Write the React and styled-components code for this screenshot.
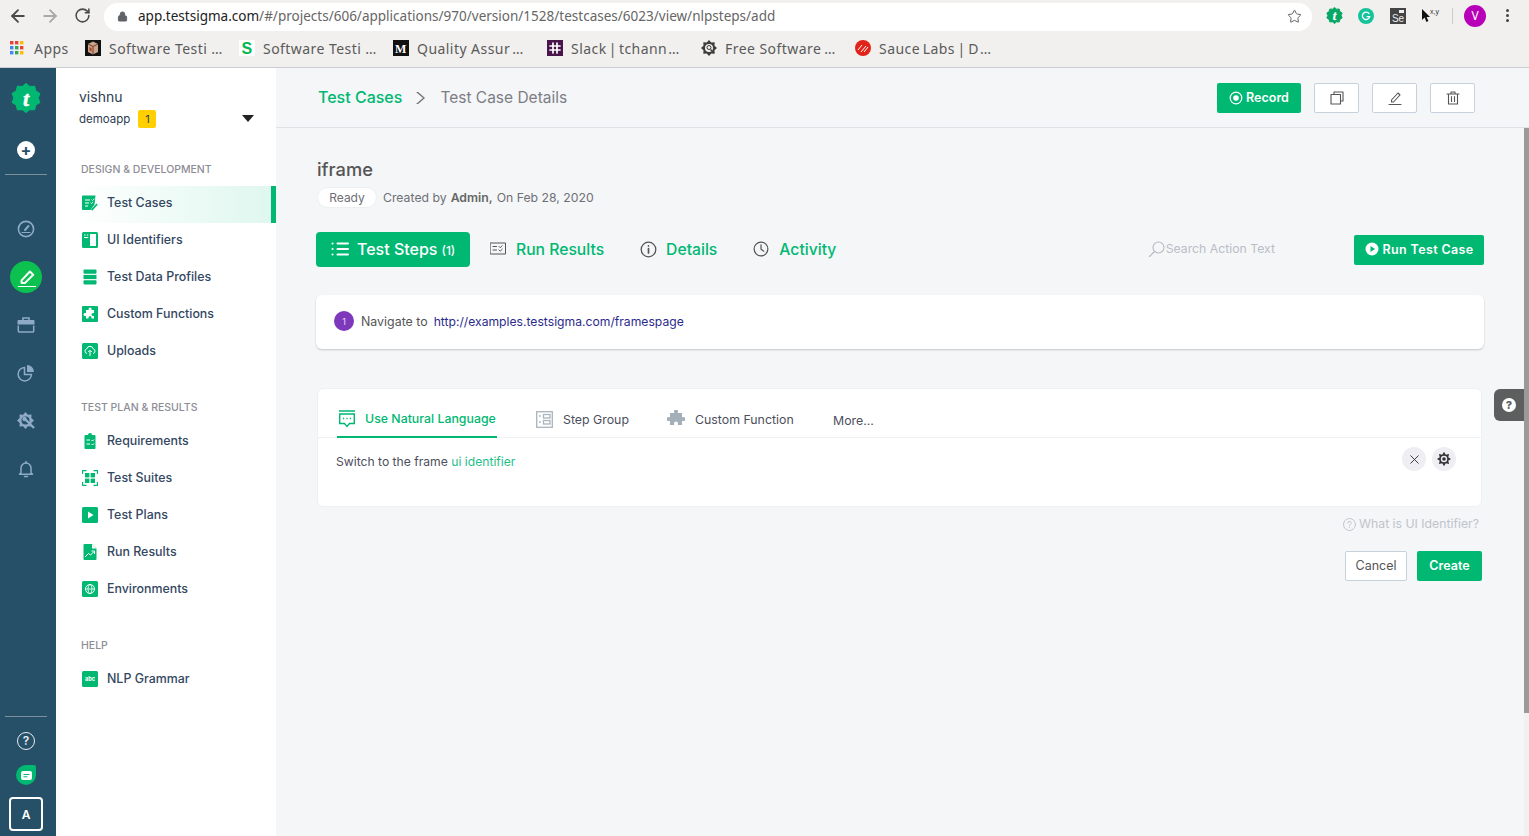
import React from "react";
import styled, { createGlobalStyle } from "styled-components";
import { ArrowLeft, ArrowRight, RotateCw, Lock, Star, X } from "lucide-react";

const GREEN = "#00b872";
const RAIL = "#255067";
const RAILICON = "#8eaac6";

const Global = createGlobalStyle`
  html, body { margin: 0; padding: 0; height: 100%; overflow: hidden; }
  body { font-family: Inter, "Liberation Sans", sans-serif; background: #f4f6f8; }
  #root { height: 100vh; }
  * { box-sizing: border-box; }
`;

const Page = styled.div`display: flex; flex-direction: column; width: 1529px; height: 836px; overflow: hidden;`;
const BrowserBar = styled.div`display: flex; align-items: center; height: 31px; padding-left: 2px; background: #f1f0ee;`;
const NavBtn = styled.span`display: flex; align-items: center; justify-content: center; width: 32px; height: 31px; color: ${p => p.$off ? "#a9a9a9" : "#4a4a4a"};`;
const Address = styled.div`display: flex; align-items: center; width: 1208px; height: 28px; margin: 2px 6px 0 6px; padding: 0 10px 0 13px; background: #fff; border-radius: 14px; color: #5f6368;`;
const Url = styled.span`flex: 1; margin: -2px 0 0 10px; font: 13.53px/28px "Noto Sans", sans-serif; color: #666; white-space: nowrap; b { font-weight: 400; color: #222; }`;
const ExtBtn = styled.span`display: flex; align-items: center; justify-content: center; width: 32px; height: 28px;`;
const BarRule = styled.span`width: 1px; height: 16px; margin: 0 11px 0 6px; background: #ccc;`;
const Avatar = styled.span`display: flex; align-items: center; justify-content: center; width: 22px; height: 22px; border-radius: 50%; background: #b800b8; color: #fff; font: 12px "Noto Sans", sans-serif;`;
const Dots = styled.span`display: flex; flex-direction: column; gap: 2px; margin-left: 20px; i { width: 3px; height: 3px; border-radius: 50%; background: #444; }`;
const SeTile = styled.span`position: relative; display: flex; flex-direction: column; justify-content: flex-end; align-items: center; width: 16px; height: 16px; background: #444; color: #eee; font: 400 10px/11px "Liberation Sans", sans-serif; &::after { content: ""; position: absolute; top: 2px; right: 2px; width: 5px; height: 3px; background: #eee; }`;
const XyTag = styled.span`font: 7px "Liberation Sans", sans-serif; color: #333; margin: -8px 0 0 -2px;`;

const Bookmarks = styled.div`display: flex; align-items: center; height: 37px; padding: 0 0 2px 10px; background: #f1f0ee; border-bottom: 1px solid #c9ccd0;`;
const Bookmark = styled.span`display: flex; align-items: center; width: ${p => p.$w}px; gap: ${p => p.$gap || 8}px; font: 14px "Noto Sans", sans-serif; color: #5a5a5a; white-space: nowrap; letter-spacing: 0.45px; word-spacing: ${p => p.$ws || 0}px;`;
const Ellipsis = styled.span`margin-left: ${p => p.$ml}px;`;

const Shell = styled.div`flex: 1; display: flex; min-height: 0;`;
const Rail = styled.nav`display: flex; flex-direction: column; justify-content: space-between; align-items: center; width: 56px; padding-right: 4px; background: ${RAIL};`;
const RailGroup = styled.div`display: flex; flex-direction: column; align-items: center;`;
const RailLogo = styled.div`height: 30px; margin: 15px 0 28px;`;
const RailPlus = styled.div`display: flex; align-items: center; justify-content: center; width: 18px; height: 18px; border-radius: 50%; background: #fff; color: ${RAIL}; font: 700 16px/18px Inter, sans-serif;`;
const RailRule = styled.div`width: 42px; height: 1px; background: #7c8f9b; margin: ${p => p.$m};`;
const RailSlot = styled.div`display: flex; align-items: center; justify-content: center; width: 32px; height: 32px; margin-top: ${p => p.$top || 16}px; border-radius: 50%; background: ${p => p.$on ? "#0cc14f" : "transparent"}; color: ${p => p.$on ? "#fff" : RAILICON};`;
const HelpRing = styled.div`display: flex; align-items: center; justify-content: center; width: 18px; height: 18px; border: 1.2px solid #e8eef3; border-radius: 50%; color: #e8eef3; font: 600 12px/1 Inter, sans-serif;`;
const Account = styled.div`display: flex; align-items: center; justify-content: center; width: 34px; height: 34px; margin: 12px 0 5px; border: 2px solid #fff; border-radius: 4px; color: #fff; font: 600 12px Inter, sans-serif;`;
const ChatBubble = styled.div`display: flex; align-items: center; justify-content: center; width: 20px; height: 20px; margin-top: 15px; background: ${GREEN}; border-radius: 50% 2px 50% 50%;`;

const Sidebar = styled.aside`width: 220px; background: #fff; padding-top: 20px;`;
const Workspace = styled.div`position: relative; height: 52px; padding-left: 23px; color: #2e3d50;`;
const UserName = styled.div`font: 400 14px/18px Inter, sans-serif;`;
const AppRow = styled.div`display: flex; align-items: center; margin-top: 4px; gap: 8px; font: 400 11.5px/18px Inter, sans-serif;`;
const Count = styled.span`display: flex; align-items: center; justify-content: center; width: 18px; height: 18px; border-radius: 2px; background: #ffcf00; font-size: 11px;`;
const Caret = styled.span`position: absolute; right: 22px; top: 27px; border: 6px solid transparent; border-top: 7px solid #222; border-bottom: 0;`;
const SectionLabel = styled.div`height: 16px; margin: ${p => p.$top}px 0 8px 25px; font: 500 10.5px/16px Inter, sans-serif; color: #8d8d96; white-space: nowrap;`;
const Item = styled.div`display: flex; align-items: center; gap: 9px; height: 37px; padding: 0 0 4px 26px; font: 500 12.4px/18px Inter, sans-serif; color: #33475f; ${p => p.$on && `background: linear-gradient(90deg, #fff 8%, #dff7ef 100%); border-right: 5px solid ${GREEN};`}`;
const Ic = styled.svg`flex: none; display: block; color: ${p => p.$c || "currentColor"};`;

const Main = styled.main`flex: 1; display: flex; flex-direction: column; min-width: 0; background: #f4f6f8;`;
const Header = styled.header`display: flex; align-items: center; height: 60px; padding: 0 54px 0 42px; border-bottom: 1px solid #dfe2e6;`;
const Crumb = styled.span`margin-top: -1px; font: ${p => p.$on ? 500 : 400} ${p => p.$on ? 16 : 15.5}px Inter, sans-serif; color: ${p => p.$on ? GREEN : "#7d7d85"};`;
const CrumbSep = styled.span`display: flex; margin: 0 14px 0 12px; color: #777;`;
const Spacer = styled.span`flex: 1;`;
const Solid = styled.button`display: flex; align-items: center; justify-content: center; gap: ${p => p.$gap || 4}px; width: ${p => p.$w}px; height: 30px; padding: 0 0 ${p => p.$pb || 0}px; border: 0; border-radius: 2px; background: ${GREEN}; color: #fff; font: 600 12.5px Inter, sans-serif; letter-spacing: ${p => p.$ls || 0}px;`;
const Ghost = styled.button`display: flex; align-items: center; justify-content: center; width: ${p => p.$w || 45}px; height: 30px; margin-left: 13px; padding: 0 0 ${p => p.$pb || 0}px; background: #fff; border: 1px solid #c5d2de; border-radius: 2px; color: #555; font: 400 12.5px Inter, sans-serif;`;

const BodyRow = styled.div`flex: 1; display: flex; min-height: 0;`;
const Content = styled.div`position: relative; flex: 1; padding: 29px 40px 0 40px;`;
const ScrollBar = styled.div`width: 5px; background: #f1f1f1; display: flex; flex-direction: column;`;
const ScrollThumb = styled.div`height: 585px; background: #9a9a9a;`;
const Title = styled.h1`margin: 0 0 0 1px; font: 500 18.3px/24px Inter, sans-serif; color: #555;`;
const Meta = styled.div`display: flex; align-items: center; height: 21px; margin-top: 6px; font: 400 12.25px Inter, sans-serif; color: #6f6f76; b { font-weight: 600; margin: 0 4px 0 4px; color: #666; }`;
const Pill = styled.span`display: flex; align-items: center; justify-content: center; width: 60px; height: 21px; margin: 0 6px 0 1px; background: #fff; border: 1px solid #eeeff1; border-radius: 11px; font-size: 12px;`;
const TabRow = styled.div`display: flex; align-items: center; height: 35px; margin-top: 24px;`;
const ActiveTab = styled.div`display: flex; align-items: center; width: 154px; height: 35px; padding: 0 0 1px 15px; gap: 8px; background: ${GREEN}; border-radius: 4px; color: #fff; font: 500 16px Inter, sans-serif; small { font-size: 12px; font-weight: 500; margin-left: 4px; }`;
const LinkTab = styled.div`display: flex; align-items: center; gap: ${p => p.$gap || 10}px; height: 34px; margin: -1px 0 0 ${p => p.$ml}px; color: ${GREEN}; font: 500 15.7px Inter, sans-serif;`;
const SearchBox = styled.div`display: flex; align-items: center; margin: -2px 79px 0 auto; font: 400 12.25px Inter, sans-serif; color: #b9bec6;`;
const RunWrap = styled.div`margin-top: 1px;`;
const StepCard = styled.div`display: flex; align-items: center; height: 54px; margin-top: 28px; padding: 0 0 2px 18px; background: #fff; border-radius: 6px; box-shadow: 0 1px 2px rgba(0,0,0,.2); font: 400 12.4px Inter, sans-serif; color: #555;`;
const StepNo = styled.span`display: flex; align-items: center; justify-content: center; width: 20px; height: 20px; margin-right: 7px; border-radius: 50%; background: #7d38bb; color: #e7d8f3; font-size: 9px;`;
const StepLink = styled.span`margin-left: 6px; font-size: 12.17px; color: #2b2a8c;`;
const Composer = styled.section`height: 119px; margin: 39px 2px 0 1px; background: #fff; border: 1px solid #eef0f2; border-radius: 6px;`;
const ComposerTabs = styled.div`display: flex; height: 49px; padding: 0 0 0 19px; border-bottom: 1px solid #f0f1f3;`;
const CTab = styled.div`display: flex; align-items: center; gap: ${p => p.$gap || 10}px; height: 49px; padding: ${p => p.$pt || 11}px 1px 0; width: ${p => p.$w}px; margin-left: ${p => p.$ml || 0}px; font: 400 12.35px Inter, sans-serif; color: ${p => p.$on ? GREEN : "#4d4f5c"}; border-bottom: ${p => p.$on ? `2px solid ${GREEN}` : "0"}; white-space: nowrap; font-weight: ${p => p.$on ? 500 : 400};`;
const ComposerBody = styled.div`display: flex; justify-content: space-between; padding: 9px 25px 0 18px; font: 400 12.15px/24px Inter, sans-serif; color: #4d4f5c; em { font-style: normal; color: #1fbf8a; }`;
const ComposerText = styled.span`margin-top: 3px;`;
const RoundRow = styled.div`display: flex; gap: 6px;`;
const RoundBtn = styled.span`display: flex; align-items: center; justify-content: center; width: 24px; height: 24px; border-radius: 50%; background: #eeeef3; color: #333;`;
const HelpLine = styled.div`display: flex; justify-content: flex-end; align-items: center; gap: 3px; margin: 9px 5px 0 0; font: 400 12.25px/16px Inter, sans-serif; color: #c0c4cc;`;
const FormActions = styled.div`display: flex; justify-content: flex-end; gap: 10px; margin: 19px 2px 0 0;`;
const CancelBtn = styled(Ghost)`margin-left: 0;`;
const HelpTab = styled.div`position: absolute; right: 0; top: 261px; display: flex; align-items: center; justify-content: center; width: 30px; height: 32px; background: #5d5f5f; border-radius: 6px 0 0 6px;`;
const HelpDot = styled.span`display: flex; align-items: center; justify-content: center; width: 14px; height: 14px; border-radius: 50%; background: #fff; color: #5d5f5f; font: 800 11px Inter, sans-serif;`;

const scallop = (cx, cy, r1, r2, n) => {
  const pts = [];
  for (let i = 0; i < n * 2; i++) {
    const a = (Math.PI * i) / n - Math.PI / 2;
    const r = i % 2 ? r2 : r1;
    pts.push(`${(cx + r * Math.cos(a)).toFixed(2)},${(cy + r * Math.sin(a)).toFixed(2)}`);
  }
  return pts.join(" ");
};

const BadgeLogo = ({ size, bg = GREEN }) => (
  <Ic as="svg" width={size} height={size} viewBox="0 0 30 30">
    <polygon points={scallop(15, 15, 14.2, 11.8, 10)} fill={bg} stroke={bg} strokeWidth="1.6" strokeLinejoin="round" />
    <text x="15" y="22.5" textAnchor="middle" fontFamily="Liberation Serif, serif" fontStyle="italic" fontWeight="700" fontSize="22" fill="#fff" stroke="#fff" strokeWidth=".5">t</text>
  </Ic>
);

const Square = ({ children, w = 16, h = 16 }) => (
  <Ic width={w} height={h} viewBox="0 0 16 16" $c={GREEN}>{children}</Ic>
);

const I = {
  cases: <Square><path d="M0 1.500A1 1 0 0 1 1 .5h12.500l-1 9-4 5.500H1a1 1 0 0 1-1-1z" fill="currentColor"/><path d="M3 5h5M3 8h4M3 11h3" stroke="#fff" strokeWidth="1"/><path d="M9.500 4.500l1 1 2-2M8.500 7.500l1 1 1.500-1.500" stroke="#fff" strokeWidth=".8" fill="none"/><path d="M9 14.500l5.500-6 1.200 1.200-5.500 6z" fill="currentColor"/></Square>,
  ui: <Square><rect width="16" height="16" rx="1.500" fill="currentColor"/><rect x="8" y="2" width="6" height="12" fill="#fff"/><path d="M2 3h1.500M4.800 3h1.500M2 5.600h4.300" stroke="#fff" strokeWidth="1"/></Square>,
  data: <Square><rect x="1.500" y=".5" width="13" height="4.200" rx="1" fill="currentColor"/><rect x="1.500" y="5.900" width="13" height="4.200" fill="currentColor"/><rect x="1.500" y="11.300" width="13" height="4.200" rx="1" fill="currentColor"/></Square>,
  fn: <Square><rect width="16" height="16" rx="1" fill="currentColor"/><path d="M6.600 3a1.500 1.500 0 0 1 3 0v1H12v3h-1a1.500 1.500 0 0 0 0 3h1v2.500H9.500v-1a1.500 1.500 0 0 0-3 0v1H4V10H3a1.500 1.500 0 0 1 0-3h1V4h2.600z" fill="#fff"/></Square>,
  up: <Square><rect width="16" height="16" rx="1.500" fill="currentColor"/><path d="M5 10.500a2.400 2.400 0 0 1-.2-4.700 3.300 3.300 0 0 1 6.400 0 2.400 2.400 0 0 1-.2 4.700" fill="none" stroke="#fff" strokeWidth="1"/><path d="M8 13V7.500M6.200 9L8 7.200 9.800 9" fill="none" stroke="#fff" strokeWidth="1"/></Square>,
  req: <Square><path d="M2.500 3a1 1 0 0 1 1-1H6a2 2 0 0 1 4 0h2.500a1 1 0 0 1 1 1v12a1 1 0 0 1-1 1h-9a1 1 0 0 1-1-1z" fill="currentColor"/><path d="M4.500 7h3.500M4.500 11h3.500M9.500 7l1 1 1.500-1.500M9.500 11l1 1 1.500-1.500" fill="none" stroke="#fff" strokeWidth="1"/></Square>,
  suite: <Square><path d="M.5 4V1a.5.5 0 0 1 .5-.5h3.500M11.500.5H15a.5.5 0 0 1 .5.5v3M15.500 12v3a.5.5 0 0 1-.5.5h-3.500M4.500 15.500H1a.5.5 0 0 1-.5-.5v-3" fill="none" stroke="currentColor" strokeWidth="1.300"/><rect x="3" y="3" width="4.400" height="4.400" fill="currentColor"/><rect x="8.600" y="3" width="4.400" height="4.400" fill="currentColor"/><rect x="3" y="8.600" width="4.400" height="4.400" fill="currentColor"/><rect x="8.600" y="8.600" width="4.400" height="4.400" fill="currentColor"/></Square>,
  plan: <Square><rect width="16" height="16" rx="1.500" fill="currentColor"/><path d="M6 4.500l5.500 3.500L6 11.500z" fill="#fff"/></Square>,
  run: <Square><path d="M1.500 1a1 1 0 0 1 1-1H10l4.500 4.500V15a1 1 0 0 1-1 1h-11a1 1 0 0 1-1-1z" fill="currentColor"/><path d="M10 0v4.500h4.500" fill="#fff"/><path d="M3 13l3.500-3.500 2 1.500 3.500-3.500M9.500 7H12.500V10" fill="none" stroke="#fff" strokeWidth="1"/></Square>,
  env: <Square><rect width="16" height="16" rx="1.500" fill="currentColor"/><circle cx="8" cy="8" r="4.500" fill="none" stroke="#fff"/><ellipse cx="8" cy="8" rx="2" ry="4.500" fill="none" stroke="#fff" strokeWidth=".8"/><path d="M3.500 8h9" stroke="#fff" strokeWidth=".8"/></Square>,
  nlp: <Square><rect width="16" height="16" rx="1.500" fill="currentColor"/><text x="8" y="10" textAnchor="middle" fontSize="5.500" fontWeight="700" fontFamily="Inter, sans-serif" fill="#fff">abc</text></Square>,
};

const Line = ({ size = 18, sw = 1.6, children, vb = "0 0 18 18", c }) => (
  <Ic width={size} height={size} viewBox={vb} $c={c} fill="none" stroke="currentColor" strokeWidth={sw} strokeLinecap="round" strokeLinejoin="round">{children}</Ic>
);

const nav = [
  { n: "Test Cases", i: I.cases, on: true },
  { n: "UI Identifiers", i: I.ui },
  { n: "Test Data Profiles", i: I.data },
  { n: "Custom Functions", i: I.fn },
  { n: "Uploads", i: I.up },
];
const plan = [
  { n: "Requirements", i: I.req },
  { n: "Test Suites", i: I.suite },
  { n: "Test Plans", i: I.plan },
  { n: "Run Results", i: I.run },
  { n: "Environments", i: I.env },
];

const NavList = ({ items }) => items.map(x => (
  <Item key={x.n} $on={x.on}>{x.i}<span>{x.n}</span></Item>
));

const Favicons = {
  apps: <Ic width="14" height="14" viewBox="0 0 14 14">{[["#ea4335",0,0],["#ea4335",5,0],["#fbbc05",10,0],["#4285f4",0,5],["#34a853",5,5],["#ea4335",10,5],["#4285f4",0,10],["#34a853",5,10],["#fbbc05",10,10]].map(([c,x,y],k)=><rect key={k} x={x} y={y} width="3.400" height="3.400" fill={c}/>)}</Ic>,
  box: <Ic width="16" height="16" viewBox="0 0 16 16"><rect width="16" height="16" fill="#111"/><path d="M3 4l5-2.500L13 4v8l-5 2.500L3 12z" fill="#c9a48a"/><path d="M8 6.500V14M3 4l5 2.500L13 4" stroke="#7a3b24" fill="none"/><path d="M4.500 7l2 1v3.500l-2-1z" fill="#b33a20"/></Ic>,
  s: <Ic width="16" height="16" viewBox="0 0 16 16"><rect width="16" height="16" fill="#fff"/><text x="8" y="14" textAnchor="middle" fontSize="16" fontWeight="700" fontFamily="Liberation Sans, sans-serif" fill="#00b84f">S</text></Ic>,
  m: <Ic width="16" height="16" viewBox="0 0 16 16"><rect width="16" height="16" fill="#111"/><text x="8" y="12.500" textAnchor="middle" fontSize="12" fontWeight="700" fontFamily="Liberation Serif, serif" fill="#fff">M</text></Ic>,
  slack: <Ic width="16" height="16" viewBox="0 0 16 16"><rect width="16" height="16" fill="#4a154b"/><path d="M6 3v10M10 3v10M3 6h10M3 10h10" stroke="#fff" strokeWidth="1.700" strokeLinecap="round"/></Ic>,
  gear: <Ic width="16" height="16" viewBox="0 0 16 16"><polygon points={scallop(8, 8, 8, 6, 8)} fill="#3d3d3d"/><circle cx="8" cy="8" r="4" fill="#f1f0ee"/><circle cx="8" cy="7.500" r="2" fill="none" stroke="#3d3d3d"/><path d="M9.500 9.500l3.500 3.500" stroke="#3d3d3d" strokeWidth="1.400"/></Ic>,
  sauce: <Ic width="16" height="16" viewBox="0 0 16 16"><circle cx="8" cy="8" r="8" fill="#e2231a"/><path d="M3 10l4-5M6 12l5-6M9 12l4-5" stroke="#fff" strokeWidth="1" fill="none"/></Ic>,
};

const bookmarks = [
  [Favicons.box, "Software Testi", 154, 0, 4],
  [Favicons.s, "Software Testi", 154, 0, 4],
  [Favicons.m, "Quality Assur", 154, 0, 2],
  [Favicons.slack, "Slack | tchann", 154, -2, 1],
  [Favicons.gear, "Free Software", 154, 0, 3],
  [Favicons.sauce, "Sauce Labs | D", 150, -1.5, 1],
];

export default function App() {
  return (
    <Page>
      <Global />
      <BrowserBar>
        <NavBtn><ArrowLeft size={20} strokeWidth={2.2} /></NavBtn>
        <NavBtn $off><ArrowRight size={20} strokeWidth={2.2} /></NavBtn>
        <NavBtn><RotateCw size={17} strokeWidth={2.2} /></NavBtn>
        <Address>
          <Lock size={11} fill="currentColor" strokeWidth={2} />
          <Url><b>app.testsigma.com</b>/#/projects/606/applications/970/version/1528/testcases/6023/view/nlpsteps/add</Url>
          <Star size={15} strokeWidth={1.6} />
        </Address>
        <ExtBtn><BadgeLogo size={17} bg="#07a866" /></ExtBtn>
        <ExtBtn>
          <Ic width="16" height="16" viewBox="0 0 16 16"><circle cx="8" cy="8" r="8" fill="#15c39a"/><path d="M11.300 6A3.700 3.700 0 1 0 11.700 8.600H8.600" fill="none" stroke="#fff" strokeWidth="1.300"/></Ic>
        </ExtBtn>
        <ExtBtn><SeTile>Se</SeTile></ExtBtn>
        <ExtBtn>
          <Ic width="11" height="14" viewBox="0 0 11 14"><path d="M1 0v11l2.600-2.400L5.400 13l2-.9-1.800-4.200H9z" fill="#111"/></Ic>
          <XyTag>x,y</XyTag>
        </ExtBtn>
        <BarRule />
        <Avatar>V</Avatar>
        <Dots><i /><i /><i /></Dots>
      </BrowserBar>
      <Bookmarks>
        <Bookmark $w={75} $gap={10}>{Favicons.apps}<span>Apps</span></Bookmark>
        {bookmarks.map(([ic, t, w, ws, em], k) => (
          <Bookmark key={k} $w={w} $ws={ws}>{ic}<span>{t}<Ellipsis $ml={em}>…</Ellipsis></span></Bookmark>
        ))}
      </Bookmarks>

      <Shell>
        <Rail>
          <RailGroup>
            <RailLogo><BadgeLogo size={30} /></RailLogo>
            <RailPlus>+</RailPlus>
            <RailRule $m="15px 0 0" />
            <RailSlot $top={38}>
              <Line size={18}><circle cx="9" cy="9" r="7.600" /><path d="M5 12.500h8" strokeWidth="1" /><path d="M8 10l3.500-4" strokeWidth="2" /></Line>
            </RailSlot>
            <RailSlot $on>
              <Line size={20} sw={1.800}><path d="M5 12L12.500 4l3 3L8 14.500H5z" /><path d="M2.500 18h15" /></Line>
            </RailSlot>
            <RailSlot>
              <Ic width="18" height="16" viewBox="0 0 18 16"><path d="M6 3V1h6v2" fill="none" stroke="currentColor" strokeWidth="1.600"/><path d="M.5 4a1 1 0 0 1 1-1h15a1 1 0 0 1 1 1v3.500H.5z" fill="currentColor"/><path d="M1.300 8.500v5.500a1 1 0 0 0 1 1h13.400a1 1 0 0 0 1-1V8.500" fill="none" stroke="currentColor" strokeWidth="1.500"/></Ic>
            </RailSlot>
            <RailSlot>
              <Ic width="18" height="18" viewBox="0 0 18 18"><path d="M7.500 3.500A6.700 6.700 0 1 0 14.500 10.500H7.500z" fill="none" stroke="currentColor" strokeWidth="1.500"/><path d="M10 1a7 7 0 0 1 7 7h-7z" fill="currentColor"/></Ic>
            </RailSlot>
            <RailSlot>
              <Ic width="18" height="18" viewBox="0 0 18 18"><polygon points={scallop(8.500, 8.500, 8.500, 6.300, 8)} fill="currentColor"/><circle cx="8.500" cy="8.500" r="4" fill={RAIL}/><path d="M7 6l10 10" stroke="currentColor" strokeWidth="2.400"/><circle cx="7.500" cy="7" r="2.200" fill="currentColor"/></Ic>
            </RailSlot>
            <RailSlot>
              <Line size={18} sw={1.500}><path d="M4 13V8a5 5 0 0 1 10 0v5l1.500 1.200H2.500z" /><path d="M9 1.500V3M7.500 16.500h3" /></Line>
            </RailSlot>
          </RailGroup>
          <RailGroup>
            <RailRule $m="0 0 15px" />
            <HelpRing>?</HelpRing>
            <ChatBubble>
              <Ic width="11" height="9" viewBox="0 0 11 9"><rect width="11" height="9" rx="2" fill="#fff"/><path d="M2.500 3.500h6M2.500 5.800h4" stroke={GREEN}/></Ic>
            </ChatBubble>
            <Account>A</Account>
          </RailGroup>
        </Rail>

        <Sidebar>
          <Workspace>
            <UserName>vishnu</UserName>
            <AppRow>demoapp <Count>1</Count></AppRow>
            <Caret />
          </Workspace>
          <SectionLabel $top={22}>DESIGN &amp; DEVELOPMENT</SectionLabel>
          <NavList items={nav} />
          <SectionLabel $top={29}>TEST PLAN &amp; RESULTS</SectionLabel>
          <NavList items={plan} />
          <SectionLabel $top={29}>HELP</SectionLabel>
          <Item>{I.nlp}<span>NLP Grammar</span></Item>
        </Sidebar>

        <Main>
          <Header>
            <Crumb $on>Test Cases</Crumb>
            <CrumbSep>
              <Line size={12} sw={1.500} vb="0 0 12 12"><path d="M3 0l7 6-7 6" /></Line>
            </CrumbSep>
            <Crumb>Test Case Details</Crumb>
            <Spacer />
            <Solid $w={84} $gap={3}>
              <Ic width="14" height="14" viewBox="0 0 14 14"><circle cx="7" cy="7" r="5.800" fill="none" stroke="#fff" strokeWidth="1.200"/><circle cx="7" cy="7" r="2.800" fill="#fff"/></Ic>
              Record
            </Solid>
            <Ghost>
              <Line size={14} sw={1.100} vb="0 0 14 14"><path d="M4 3.500V1h9v9h-2.500" /><rect x="1" y="3.500" width="9.500" height="9.500" /></Line>
            </Ghost>
            <Ghost>
              <Line size={14} sw={1.100} vb="0 0 14 14"><path d="M3.500 9l6.500-7 2 2-6.500 7H3.500z" /><path d="M1 13.500h12" /></Line>
            </Ghost>
            <Ghost>
              <Line size={14} sw={1.100} vb="0 0 14 14"><path d="M1 3h12M5 3V1h4v2M2.500 3v10h9V3M5.500 5.500v5M8.500 5.500v5" /></Line>
            </Ghost>
          </Header>
          <BodyRow>
            <Content>
              <Title>iframe</Title>
              <Meta>
                <Pill>Ready</Pill>
                Created by <b>Admin,</b> On Feb 28, 2020
              </Meta>
              <TabRow>
                <ActiveTab>
                  <Line size={18} sw={1.600} c="#fff"><path d="M6.500 3.500H17M6.500 9H17M6.500 14.500H17M1.500 3.500h.1M1.500 9h.1M1.500 14.500h.1" strokeWidth="2" /></Line>
                  <span>Test Steps<small>(1)</small></span>
                </ActiveTab>
                <LinkTab $ml={20}>
                  <Line size={16} sw={1} c="#555" vb="0 0 16 16"><rect x=".5" y="2" width="15" height="11" /><path d="M3 5.500h3.500M3 9h3.500M9 5.500l1.200 1.200 2-2M9 9l1.200 1.200 2-2" /></Line>
                  Run Results
                </LinkTab>
                <LinkTab $ml={36} $gap={9}>
                  <Line size={17} sw={1.300} c="#555" vb="0 0 17 17"><circle cx="8.500" cy="8.500" r="7.300" /><path d="M8.500 7.500v4.500M8.500 4.800v.2" strokeWidth="1.700" /></Line>
                  Details
                </LinkTab>
                <LinkTab $ml={36}>
                  <Line size={16} sw={1.300} c="#555" vb="0 0 17 17"><circle cx="8.500" cy="8.500" r="7.300" /><path d="M8.500 4v4.800l3 2" /></Line>
                  Activity
                </LinkTab>
                <SearchBox>
                  <Line size={18} sw={1.100} c="#b5bac2" vb="0 0 18 18"><circle cx="10.500" cy="7.500" r="5.500" /><path d="M6.500 11.500L1.500 16.500" /></Line>
                  Search Action Text
                </SearchBox>
                <RunWrap>
                  <Solid $w={130} $ls={0.35} $pb={2}>
                    <Ic width="14" height="14" viewBox="0 0 14 14"><circle cx="7" cy="7" r="6.500" fill="#fff"/><path d="M5.500 4l4.500 3-4.500 3z" fill={GREEN}/></Ic>
                    Run Test Case
                  </Solid>
                </RunWrap>
              </TabRow>
              <StepCard>
                <StepNo>1</StepNo>
                Navigate to <StepLink>http://examples.testsigma.com/framespage</StepLink>
              </StepCard>
              <Composer>
                <ComposerTabs>
                  <CTab $on $w={160} $gap={9} $pt={12}>
                    <Ic width="18" height="18" viewBox="0 0 18 18" fill="none" stroke="currentColor" strokeWidth="1.400"><path d="M1 1h16M1.700 4h14.600v9.500H11.500L9 16.500l-2.500-3H1.700z" /><path d="M5 8.500h1.200M8.400 8.500h1.200M11.800 8.500H13" /></Ic>
                    Use Natural Language
                  </CTab>
                  <CTab $ml={38} $w={131} $gap={10}>
                    <Ic width="17" height="17" viewBox="0 0 17 17" $c="#a8b4be" fill="none" stroke="currentColor" strokeWidth="1.300"><rect x=".7" y=".7" width="15.600" height="15.600" /><path d="M3 5h1.800M3 11h1.800" /><rect x="7.500" y="3.500" width="6.500" height="3.500" /><rect x="7.500" y="9.500" width="6.500" height="3.500" /></Ic>
                    Step Group
                  </CTab>
                  <CTab $w={166} $gap={10}>
                    <Ic width="18" height="18" viewBox="0 0 18 18" $c="#a3afb9"><path d="M7 1.500a2 2 0 0 1 4 0c0 .7-.3 1-.3 1.500H15v4.300c.5 0 .8-.3 1.500-.3a2 2 0 0 1 0 4c-.7 0-1-.3-1.500-.3V15h-4.300c0-.5.300-.8.300-1.500a2 2 0 0 0-4 0c0 .7.300 1 .3 1.500H3v-4.300c-.5 0-.8.3-1.500.3a2 2 0 0 1 0-4c.7 0 1 .3 1.500.3V3h4.300c0-.5-.3-.8-.3-1.500z" fill="currentColor"/></Ic>
                    Custom Function
                  </CTab>
                  <CTab $w={60} $pt={13}>More...</CTab>
                </ComposerTabs>
                <ComposerBody>
                  <ComposerText>Switch to the frame <em>ui identifier</em></ComposerText>
                  <RoundRow>
                    <RoundBtn><X size={15} strokeWidth={1.500} /></RoundBtn>
                    <RoundBtn>
                      <Ic width="14" height="14" viewBox="0 0 14 14"><polygon points={scallop(7, 7, 7.2, 4.600, 8)} fill="#333"/><circle cx="7" cy="7" r="3.200" fill="#eeeef3"/><circle cx="7" cy="7" r="1.800" fill="#333"/></Ic>
                    </RoundBtn>
                  </RoundRow>
                </ComposerBody>
              </Composer>
              <HelpLine>
                <Line size={13} sw={1} vb="0 0 13 13"><circle cx="6.500" cy="6.500" r="6" /><path d="M4.800 5a1.700 1.700 0 1 1 2.500 1.500c-.6.300-.8.700-.8 1.300M6.500 9.500v.2" /></Line>
                What is UI Identifier?
              </HelpLine>
              <FormActions>
                <CancelBtn $w={62} $pb={2}>Cancel</CancelBtn>
                <Solid $w={65} $pb={2}>Create</Solid>
              </FormActions>
              <HelpTab><HelpDot>?</HelpDot></HelpTab>
            </Content>
            <ScrollBar><ScrollThumb /></ScrollBar>
          </BodyRow>
        </Main>
      </Shell>
    </Page>
  );
}
